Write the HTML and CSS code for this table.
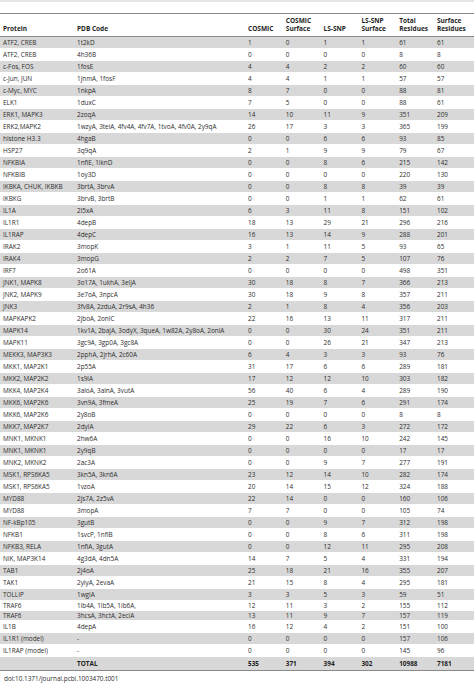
FILE: index.html
```html
<!DOCTYPE html>
<html lang="en">
<head>
<meta charset="utf-8">
<title>Table 1</title>
<link rel="stylesheet" href="styles.css">
</head>
<body>
<div class="strip"></div>
<table class="data">
<colgroup>
<col class="c-prot"><col class="c-pdb"><col class="c-num"><col class="c-num"><col class="c-num"><col class="c-num"><col class="c-num"><col class="c-last">
</colgroup>
<thead>
<tr><th>Protein</th><th>PDB Code</th><th>COSMIC</th><th>COSMIC<br>Surface</th><th>LS-SNP</th><th>LS-SNP<br>Surface</th><th>Total<br>Residues</th><th>Surface<br>Residues</th></tr>
</thead>
<tbody>
<tr><td>ATF2, CREB</td><td>1t2kD</td><td>1</td><td>0</td><td>1</td><td>1</td><td>61</td><td>61</td></tr>
<tr><td>ATF2, CREB</td><td>4h36B</td><td>0</td><td>0</td><td>0</td><td>0</td><td>8</td><td>8</td></tr>
<tr><td>c-Fos, FOS</td><td>1fosE</td><td>4</td><td>4</td><td>2</td><td>2</td><td>60</td><td>60</td></tr>
<tr><td>c-Jun, JUN</td><td>1jnmA, 1fosF</td><td>4</td><td>4</td><td>1</td><td>1</td><td>57</td><td>57</td></tr>
<tr><td>c-Myc, MYC</td><td>1nkpA</td><td>8</td><td>7</td><td>0</td><td>0</td><td>88</td><td>81</td></tr>
<tr><td>ELK1</td><td>1duxC</td><td>7</td><td>5</td><td>0</td><td>0</td><td>88</td><td>61</td></tr>
<tr><td>ERK1, MAPK3</td><td>2zoqA</td><td>14</td><td>10</td><td>11</td><td>9</td><td>351</td><td>209</td></tr>
<tr><td>ERK2,MAPK2</td><td>1wzyA, 3teiA, 4fv4A, 4fv7A, 1tvoA, 4fv0A, 2y9qA</td><td>26</td><td>17</td><td>3</td><td>3</td><td>365</td><td>199</td></tr>
<tr><td>histone H3.3</td><td>4hgaB</td><td>0</td><td>0</td><td>6</td><td>6</td><td>93</td><td>85</td></tr>
<tr><td>HSP27</td><td>3q9qA</td><td>2</td><td>1</td><td>9</td><td>9</td><td>79</td><td>67</td></tr>
<tr><td>NFKBIA</td><td>1nfiE, 1iknD</td><td>0</td><td>0</td><td>8</td><td>6</td><td>215</td><td>142</td></tr>
<tr><td>NFKBIB</td><td>1oy3D</td><td>0</td><td>0</td><td>0</td><td>0</td><td>220</td><td>130</td></tr>
<tr><td>IKBKA, CHUK, IKBKB</td><td>3brtA, 3brvA</td><td>0</td><td>0</td><td>8</td><td>8</td><td>39</td><td>39</td></tr>
<tr><td>IKBKG</td><td>3brvB, 3brtB</td><td>0</td><td>0</td><td>1</td><td>1</td><td>62</td><td>61</td></tr>
<tr><td>IL1A</td><td>2l5xA</td><td>6</td><td>3</td><td>11</td><td>8</td><td>151</td><td>102</td></tr>
<tr><td>IL1R1</td><td>4depB</td><td>18</td><td>13</td><td>29</td><td>21</td><td>296</td><td>216</td></tr>
<tr><td>IL1RAP</td><td>4depC</td><td>16</td><td>13</td><td>14</td><td>9</td><td>288</td><td>201</td></tr>
<tr><td>IRAK2</td><td>3mopK</td><td>3</td><td>1</td><td>11</td><td>5</td><td>93</td><td>65</td></tr>
<tr><td>IRAK4</td><td>3mopG</td><td>2</td><td>2</td><td>7</td><td>5</td><td>107</td><td>76</td></tr>
<tr><td>IRF7</td><td>2o61A</td><td>0</td><td>0</td><td>0</td><td>0</td><td>498</td><td>351</td></tr>
<tr><td>JNK1, MAPK8</td><td>3o17A, 1ukhA, 3eljA</td><td>30</td><td>18</td><td>8</td><td>7</td><td>366</td><td>213</td></tr>
<tr><td>JNK2, MAPK9</td><td>3e7oA, 3npcA</td><td>30</td><td>18</td><td>9</td><td>8</td><td>357</td><td>211</td></tr>
<tr><td>JNK3</td><td>3fv8A, 2zduA, 2r9sA, 4h36</td><td>2</td><td>1</td><td>8</td><td>4</td><td>356</td><td>203</td></tr>
<tr><td>MAPKAPK2</td><td>2jboA, 2onlC</td><td>22</td><td>16</td><td>13</td><td>11</td><td>317</td><td>211</td></tr>
<tr><td>MAPK14</td><td>1kv1A, 2bajA, 3odyX, 3queA, 1w82A, 2y8oA, 2onlA</td><td>0</td><td>0</td><td>30</td><td>24</td><td>351</td><td>211</td></tr>
<tr><td>MAPK11</td><td>3gc9A, 3gp0A, 3gc8A</td><td>0</td><td>0</td><td>26</td><td>21</td><td>347</td><td>213</td></tr>
<tr><td>MEKK3, MAP3K3</td><td>2pphA, 2jrhA, 2c60A</td><td>6</td><td>4</td><td>3</td><td>3</td><td>93</td><td>76</td></tr>
<tr><td>MKK1, MAP2K1</td><td>2p55A</td><td>31</td><td>17</td><td>6</td><td>6</td><td>289</td><td>181</td></tr>
<tr><td>MKK2, MAP2K2</td><td>1s9iA</td><td>17</td><td>12</td><td>12</td><td>10</td><td>303</td><td>182</td></tr>
<tr><td>MKK4, MAP2K4</td><td>3aloA, 3alnA, 3vutA</td><td>56</td><td>40</td><td>6</td><td>4</td><td>289</td><td>190</td></tr>
<tr><td>MKK6, MAP2K6</td><td>3vn9A, 3fmeA</td><td>25</td><td>19</td><td>7</td><td>6</td><td>291</td><td>174</td></tr>
<tr><td>MKK6, MAP2K6</td><td>2y8oB</td><td>0</td><td>0</td><td>0</td><td>0</td><td>8</td><td>8</td></tr>
<tr><td>MKK7, MAP2K7</td><td>2dylA</td><td>29</td><td>22</td><td>6</td><td>3</td><td>272</td><td>172</td></tr>
<tr><td>MNK1, MKNK1</td><td>2hw6A</td><td>0</td><td>0</td><td>16</td><td>10</td><td>242</td><td>145</td></tr>
<tr><td>MNK1, MKNK1</td><td>2y9qB</td><td>0</td><td>0</td><td>0</td><td>0</td><td>17</td><td>17</td></tr>
<tr><td>MNK2, MKNK2</td><td>2ac3A</td><td>0</td><td>0</td><td>9</td><td>7</td><td>277</td><td>191</td></tr>
<tr><td>MSK1, RPS6KA5</td><td>3kn5A, 3kn6A</td><td>23</td><td>12</td><td>14</td><td>10</td><td>282</td><td>174</td></tr>
<tr><td>MSK1, RPS6KA5</td><td>1vzoA</td><td>20</td><td>14</td><td>15</td><td>12</td><td>324</td><td>188</td></tr>
<tr><td>MYD88</td><td>2js7A, 2z5vA</td><td>22</td><td>14</td><td>0</td><td>0</td><td>160</td><td>106</td></tr>
<tr><td>MYD88</td><td>3mopA</td><td>7</td><td>7</td><td>0</td><td>0</td><td>105</td><td>74</td></tr>
<tr><td>NF-kBp105</td><td>3gutB</td><td>0</td><td>0</td><td>9</td><td>7</td><td>312</td><td>198</td></tr>
<tr><td>NFKB1</td><td>1svcP, 1nfiB</td><td>0</td><td>0</td><td>8</td><td>6</td><td>311</td><td>198</td></tr>
<tr><td>NFKB3, RELA</td><td>1nfiA, 3gutA</td><td>0</td><td>0</td><td>12</td><td>11</td><td>295</td><td>208</td></tr>
<tr><td>NIK, MAP3K14</td><td>4g3dA, 4dn5A</td><td>14</td><td>7</td><td>5</td><td>4</td><td>331</td><td>194</td></tr>
<tr><td>TAB1</td><td>2j4oA</td><td>25</td><td>18</td><td>21</td><td>16</td><td>355</td><td>207</td></tr>
<tr><td>TAK1</td><td>2yiyA, 2evaA</td><td>21</td><td>15</td><td>8</td><td>4</td><td>295</td><td>181</td></tr>
<tr><td>TOLLIP</td><td>1wglA</td><td>3</td><td>3</td><td>5</td><td>3</td><td>59</td><td>51</td></tr>
<tr class="tight"><td>TRAF6</td><td>1lb4A, 1lb5A, 1lb6A,</td><td>12</td><td>11</td><td>3</td><td>2</td><td>155</td><td>112</td></tr>
<tr class="tight"><td>TRAF6</td><td>3hcsA, 3hctA, 2eciA</td><td>13</td><td>11</td><td>9</td><td>7</td><td>157</td><td>119</td></tr>
<tr><td>IL1B</td><td>4depA</td><td>16</td><td>12</td><td>4</td><td>2</td><td>151</td><td>100</td></tr>
<tr><td>IL1R1 (model)</td><td>-</td><td>0</td><td>0</td><td>0</td><td>0</td><td>157</td><td>106</td></tr>
<tr><td>IL1RAP (model)</td><td>-</td><td>0</td><td>0</td><td>0</td><td>0</td><td>145</td><td>96</td></tr>
<tr class="total"><td></td><td>TOTAL</td><td>535</td><td>371</td><td>394</td><td>302</td><td>10988</td><td>7181</td></tr>
</tbody>
</table>
<p class="doi">doi:10.1371/journal.pcbi.1003470.t001</p>
</body>
</html>
```

FILE: styles.css
```css
html, body {
  margin: 0;
  padding: 0;
  background: #ffffff;
}

body {
  font-family: "Open Sans", "DejaVu Sans", sans-serif;
  color: #2e2e2e;
  width: 474px;
}

.strip {
  height: 2px;
  background: #e6e6e6;
}

.data {
  margin-top: 11px;
  width: 474px;
  table-layout: fixed;
  border-collapse: separate;
  border-spacing: 0;
  font-size: 6.4px;
  line-height: 8px;
}

.c-prot { width: 74px; }
.c-pdb { width: 171px; }
.c-num { width: 37.8px; }
.c-last { width: 40px; }

.data th,
.data td {
  padding: 0 0 0 3px;
  text-align: left;
  white-space: nowrap;
  overflow: visible;
}

.data thead tr {
  height: 24px;
}

.data th {
  vertical-align: bottom;
  padding-bottom: 3px;
  font-size: 6.5px;
  font-weight: 700;
  color: #1e1e1e;
  border-top: 1px solid #8a8a8a;
  border-bottom: 1px solid #8a8a8a;
}

.data tbody tr {
  height: 12px;
}

.data td {
  vertical-align: middle;
  border-bottom: 1px solid #ffffff;
}

.data tbody tr:nth-child(odd) td {
  background: #d8d8d8;
}

.data tbody tr.tight {
  height: 10px;
}

.data tbody tr.total {
  height: 14px;
}

.data tr.total td {
  font-weight: 700;
  color: #1e1e1e;
  border-bottom: 1px solid #8a8a8a;
}

.doi {
  margin: 4px 0 0 4px;
  font-size: 6.4px;
  line-height: 8px;
  color: #2e2e2e;
}
```
